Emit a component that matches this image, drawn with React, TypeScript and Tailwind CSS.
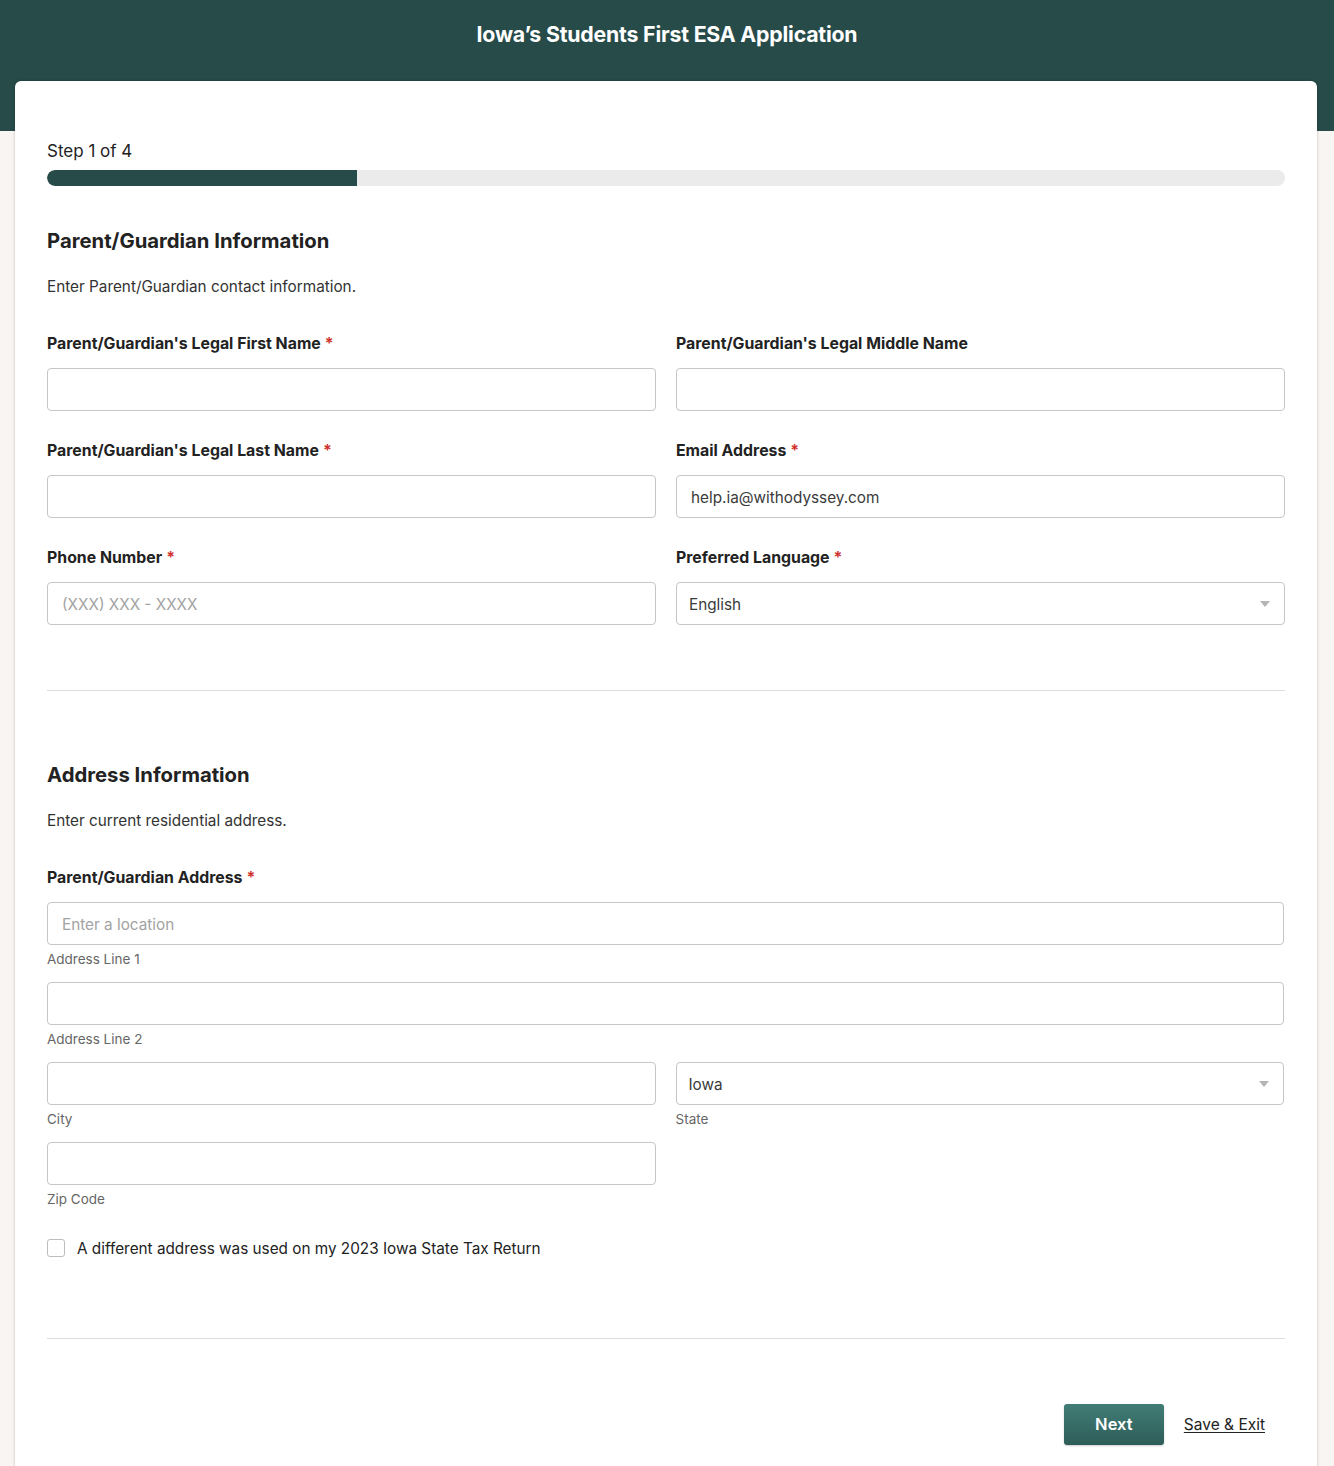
import React from "react";

const font = { fontFamily: "Inter, 'Noto Sans', sans-serif" };

function Label({ text, required }: { text: string; required?: boolean }) {
  return (
    <div className="pt-px -mb-px text-[15.85px] leading-[22px] font-bold text-[#222]">
      {text}
      {required && <span className="ml-1 text-[#d0312d]">*</span>}
    </div>
  );
}

function TextInput({ value, placeholder }: { value?: string; placeholder?: string }) {
  return (
    <div className="h-[43px] w-full rounded-[4px] border border-[#c6c6c6] bg-white px-[14px] pt-[3px] flex items-center text-[15.3px]">
      {value ? (
        <span className="text-[#3a3a3a]">{value}</span>
      ) : (
        <span className="text-[#a3a3a3]">{placeholder}</span>
      )}
    </div>
  );
}

function Select({ value }: { value: string }) {
  return (
    <div className="h-[43px] w-full rounded-[4px] border border-[#c6c6c6] bg-white pl-[12px] pr-[14px] flex items-center justify-between text-[15.3px] text-[#3a3a3a]">
      <span className="pt-[3px]">{value}</span>
      <svg width="10" height="6" viewBox="0 0 10 6">
        <path d="M0 0h10L5 6z" fill="#b5b5b5" />
      </svg>
    </div>
  );
}

function Field({
  label,
  required,
  children,
}: {
  label: string;
  required?: boolean;
  children: React.ReactNode;
}) {
  return (
    <div className="flex flex-col gap-[14px]">
      <Label text={label} required={required} />
      {children}
    </div>
  );
}

function Helper({ children }: { children: React.ReactNode }) {
  return <div className="flex flex-col gap-[5px]">{children}</div>;
}

function HelpText({ text }: { text: string }) {
  return <div className="text-[13.5px] leading-[18px] text-[#666]">{text}</div>;
}

export default function App() {
  return (
    <div className="min-h-screen bg-[#f8f5f2]" style={font}>
      {/* Header band */}
      <div className="h-[131px] bg-[#264b49] pt-[20px] text-center">
        <h1 className="text-[21.3px] leading-[28px] font-bold text-white tracking-[-0.2px]">
          Iowa’s Students First ESA Application
        </h1>
      </div>

      {/* Card */}
      <div className="-mt-[50px] ml-[15px] mr-[17px] rounded-[6px] bg-white shadow-[0_0_3px_rgba(0,0,0,0.25)] px-8 pt-[58px] pb-[40px]">
        <div className="-mb-px text-[17px] leading-6 text-[#222]">Step 1 of 4</div>
        <div className="mt-2 h-4 w-full rounded-full bg-[#ebebeb] overflow-hidden">
          <div className="h-full w-1/4 rounded-l-full bg-[#264b49]" />
        </div>

        {/* Parent / Guardian section */}
        <h2 className="mt-[41px] text-[20.3px] leading-[28px] font-bold text-[#222]">
          Parent/Guardian Information
        </h2>
        <p className="mt-[21px] text-[15.3px] leading-[22px] text-[#333]">
          Enter Parent/Guardian contact information.
        </p>

        <div className="mt-[34px] grid grid-cols-2 gap-x-5 gap-y-[28px]">
          <Field label="Parent/Guardian's Legal First Name" required>
            <TextInput />
          </Field>
          <Field label="Parent/Guardian's Legal Middle Name">
            <TextInput />
          </Field>
          <Field label="Parent/Guardian's Legal Last Name" required>
            <TextInput />
          </Field>
          <Field label="Email Address" required>
            <TextInput value="help.ia@withodyssey.com" />
          </Field>
          <Field label="Phone Number" required>
            <TextInput placeholder="(XXX) XXX - XXXX" />
          </Field>
          <Field label="Preferred Language" required>
            <Select value="English" />
          </Field>
        </div>

        <div className="mt-[65px] h-px bg-[#dcdcdc]" />

        {/* Address section */}
        <h2 className="mt-[70px] text-[20.3px] leading-[28px] font-bold text-[#222]">
          Address Information
        </h2>
        <p className="mt-[21px] text-[15.3px] leading-[22px] text-[#333]">
          Enter current residential address.
        </p>

        <div className="mt-[34px] pr-px">
          <Label text="Parent/Guardian Address" required />
          <div className="mt-[14px] flex flex-col gap-[14px]">
            <Helper>
              <TextInput placeholder="Enter a location" />
              <HelpText text="Address Line 1" />
            </Helper>
            <Helper>
              <TextInput />
              <HelpText text="Address Line 2" />
            </Helper>
            <div className="grid grid-cols-2 gap-x-5">
              <Helper>
                <TextInput />
                <HelpText text="City" />
              </Helper>
              <Helper>
                <Select value="Iowa" />
                <HelpText text="State" />
              </Helper>
            </div>
            <div className="grid grid-cols-2 gap-x-5">
              <Helper>
                <TextInput />
                <HelpText text="Zip Code" />
              </Helper>
            </div>
          </div>
        </div>

        <label className="mt-[28px] flex items-center gap-3 text-[15.3px] leading-[22px] text-[#222]">
          <span className="h-[18px] w-[18px] rounded-[3px] border border-[#bdbdbd] bg-white" />
          <span className="pt-[2px]">A different address was used on my 2023 Iowa State Tax Return</span>
        </label>

        <div className="mt-[78px] h-px bg-[#dcdcdc]" />

        {/* Actions */}
        <div className="mt-[65px] flex items-center justify-end gap-5 pr-5">
          <button className="h-[41px] w-[100px] rounded-[3px] bg-gradient-to-b from-[#417d76] to-[#2e5d58] text-[16.5px] font-semibold text-white shadow-[0_1px_2px_rgba(0,0,0,0.2)]">
            Next
          </button>
          <a className="text-[15.5px] leading-[22px] text-[#222] underline underline-offset-2">Save &amp; Exit</a>
        </div>
      </div>
    </div>
  );
}
